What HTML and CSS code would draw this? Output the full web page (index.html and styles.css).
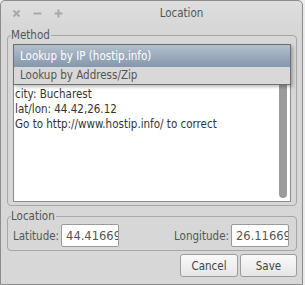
FILE: index.html
```html
<!DOCTYPE html>
<html lang="en">
<head>
    <meta charset="UTF-8">
    <title>Location</title>
    <link rel="stylesheet" href="styles.css">
</head>
<body>
    <div class="window">
        <div class="titlebar">
            <div class="controls">
                <svg class="ctl" width="9" height="9" viewBox="0 0 9 9"><path d="M1.5 1.5L7.5 7.5M7.5 1.5L1.5 7.5"/></svg>
                <svg class="ctl" width="9" height="9" viewBox="0 0 9 9"><path d="M0.5 4.5H8.5"/></svg>
                <svg class="ctl" width="9" height="9" viewBox="0 0 9 9"><path d="M0.5 4.5H8.5M4.5 0.5V8.5"/></svg>
            </div>
            <div class="title">Location</div>
        </div>
        <div class="content">
            <fieldset class="group method">
                <legend>Method</legend>
                <ul class="popup">
                    <li class="selected">Lookup by IP (hostip.info)</li>
                    <li>Lookup by Address/Zip</li>
                </ul>
                <div class="result">
                    <div class="lines">
                        <div>city: Bucharest</div>
                        <div>lat/lon: 44.42,26.12</div>
                        <div>Go to http://www.hostip.info/ to correct</div>
                    </div>
                    <div class="scrollbar"></div>
                </div>
            </fieldset>
            <fieldset class="group location">
                <legend>Location</legend>
                <div class="coords">
                    <label class="field">Latitude: <input type="text" value="44.41669"></label>
                    <label class="field">Longitude: <input type="text" value="26.11669"></label>
                </div>
            </fieldset>
            <div class="buttons">
                <button class="cancel">Cancel</button>
                <button class="save">Save</button>
            </div>
        </div>
    </div>
</body>
</html>
```

FILE: styles.css
```css
body {
    margin: 0;
    background: #ececec;
    font-family: "DejaVu Sans Condensed", "DejaVu Sans", sans-serif;
    font-size: 11.5px;
    color: #555;
}

.window {
    box-sizing: border-box;
    width: 303px;
    height: 285px;
    background: #d7d7d7;
    border: 1px solid #8c8c8c;
    border-radius: 5px 5px 0 0;
}

.titlebar {
    box-sizing: border-box;
    display: flex;
    align-items: center;
    height: 27px;
    padding-bottom: 3px;
    background: linear-gradient(#dedede, #d7d7d7);
    border-radius: 5px 5px 0 0;
}

.controls {
    display: flex;
    gap: 12px;
    padding-left: 11px;
}

.ctl path {
    stroke: #a8a8a8;
    stroke-width: 2;
    fill: none;
}

.title {
    flex: 1;
    text-align: center;
    color: #555;
    padding-right: 2px;
}

.content {
    padding: 0 5px 0 6px;
}

.group {
    margin: 0;
    border: 1px solid #a6a6a6;
    border-radius: 4px;
    padding: 2px 5px 3px 5px;
}

.group legend {
    line-height: 14px;
    padding: 0 1px 0 0;
    margin-left: -2px;
    color: #555;
}

.popup {
    list-style: none;
    margin: 0;
    padding: 0;
    border: 1px solid #6f6f6f;
    background: #d8d8d8;
    box-shadow: 2px 2px 3px rgba(0, 0, 0, 0.25);
    position: relative;
    z-index: 1;
}

.popup li {
    height: 17px;
    line-height: 17px;
    padding-left: 6px;
    color: #555;
}

.popup .selected {
    height: 22px;
    line-height: 22px;
    color: #fff;
    background: linear-gradient(#b3bfcc, #8697ac);
}

.result {
    display: flex;
    height: 116px;
    background: #fff;
    border: 1px solid #8a8a8a;
    border-top: none;
    color: #333;
}

.lines {
    flex: 1;
    padding: 2px 0 0 1px;
    line-height: 15px;
}

.scrollbar {
    width: 8px;
    margin: 0 3px 3px 0;
    background: #9b9b9b;
    border-radius: 0 0 4px 4px;
}

.location {
    margin-top: 3px;
    padding: 1px 7px 3px 5px;
}

.coords {
    display: flex;
    justify-content: space-between;
}

.field {
    display: flex;
    align-items: center;
    gap: 2px;
    color: #555;
}

.field input {
    box-sizing: border-box;
    width: 58px;
    height: 23px;
    padding: 0 0 0 4px;
    border: 1px solid #9a9a9a;
    border-radius: 2px;
    background: #fff;
    font-family: "DejaVu Sans", sans-serif;
    font-size: 11.5px;
    color: #555;
}

.buttons {
    display: flex;
    justify-content: flex-end;
    gap: 2px;
    margin-top: 3px;
}

.buttons button {
    box-sizing: border-box;
    height: 23px;
    width: 58px;
    border: 1px solid #9c9c9c;
    border-radius: 3px;
    background: linear-gradient(#fafafa, #e6e6e6);
    font: inherit;
    color: #444;
    padding: 0;
}

.buttons .save {
    width: 57px;
}
```
